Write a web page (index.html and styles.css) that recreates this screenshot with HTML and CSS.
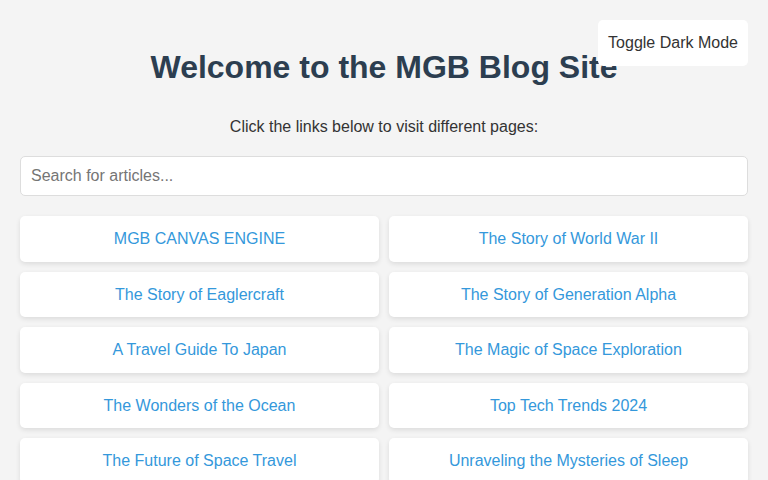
FILE: index.html
```html
<!DOCTYPE html>
<html lang="en">
<head>
<meta charset="utf-8">
<title>MGB Blog Site</title>
<link rel="stylesheet" href="styles.css">
</head>
<body>
<button class="toggle">Toggle Dark Mode</button>
<main class="page">
  <h1 class="title">Welcome to the MGB Blog Site</h1>
  <p class="subtitle">Click the links below to visit different pages:</p>
  <input class="search" type="text" placeholder="Search for articles...">
  <div class="grid">
    <a class="card" href="#">MGB CANVAS ENGINE</a>
    <a class="card" href="#">The Story of World War II</a>
    <a class="card" href="#">The Story of Eaglercraft</a>
    <a class="card" href="#">The Story of Generation Alpha</a>
    <a class="card" href="#">A Travel Guide To Japan</a>
    <a class="card" href="#">The Magic of Space Exploration</a>
    <a class="card" href="#">The Wonders of the Ocean</a>
    <a class="card" href="#">Top Tech Trends 2024</a>
    <a class="card" href="#">The Future of Space Travel</a>
    <a class="card" href="#">Unraveling the Mysteries of Sleep</a>
  </div>
</main>
</body>
</html>
```
FILE: styles.css
```css
* { box-sizing: border-box; }
html, body { margin: 0; padding: 0; }
body {
  background: #f4f4f4;
  font-family: "Liberation Sans", Arial, sans-serif;
  color: #333;
  overflow: hidden;
}
.page {
  padding: 49px 20px 20px;
}
.title {
  margin: 0;
  text-align: center;
  font-size: 32px;
  line-height: 37px;
  font-weight: bold;
  color: #2c3e50;
}
.subtitle {
  margin: 32px 0 20px;
  text-align: center;
  font-size: 16px;
  line-height: 18px;
  color: #333;
}
.search {
  display: block;
  width: 100%;
  height: 40px;
  padding: 10px;
  border: 1px solid #ddd;
  border-radius: 5px;
  background: #fff;
  font-family: inherit;
  font-size: 16px;
  color: #333;
  margin: 0 0 20px;
}
.search::placeholder { color: #757575; }
.grid {
  display: grid;
  grid-template-columns: 1fr 1fr;
  gap: 10px;
}
.card {
  display: block;
  background: #fff;
  border-radius: 5px;
  box-shadow: 0 2px 5px rgba(0,0,0,0.1);
  padding: 13px 10px;
  line-height: 19.5px;
  font-size: 16px;
  text-align: center;
  color: #3498db;
  text-decoration: none;
}
.toggle {
  position: absolute;
  top: 20px;
  right: 20px;
  width: 150px;
  height: 46px;
  padding: 0 10px;
  background: #fff;
  border: none;
  border-radius: 5px;
  font-family: inherit;
  font-size: 16px;
  color: #333;
  z-index: 2;
}
```
